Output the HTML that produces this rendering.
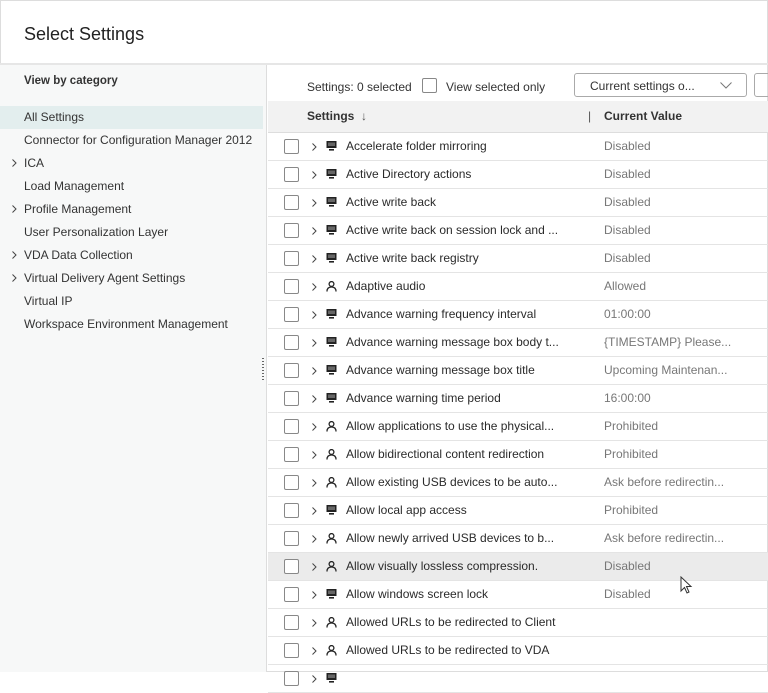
<!DOCTYPE html>
<html><head><meta charset="utf-8"><style>
*{box-sizing:border-box;margin:0;padding:0}
svg{display:block}
body{width:768px;height:672px;overflow:hidden;background:#fff;font-family:"Liberation Sans",sans-serif;color:#333;position:relative;font-size:12px}
.frame{position:absolute;left:0;top:0;width:768px;height:672px;border:1px solid #ddd}
.title{position:absolute;left:24px;top:24px;font-size:18px;color:#222}
.hline{position:absolute;left:0;top:63px;width:768px;height:2px;background:#e6e6e6}
.side{position:absolute;left:0;top:65px;width:267px;height:607px;background:#f7f8f8;border-right:1px solid #ddd}
.side .h{position:absolute;left:24px;top:10px;font-weight:bold;font-size:11.5px;color:#333}
.side .it{position:absolute;left:0;width:263px;height:23px;line-height:23px;padding-left:24px;font-size:12px;color:#333;white-space:nowrap}
.side .sel{background:#e3eeee}
.side .ch{position:absolute;left:12px;top:7px}
.grip{position:absolute;left:262px;top:358px;width:2px;height:22px;background:repeating-linear-gradient(#666 0 1px,transparent 1px 3px)}
.tb{position:absolute;left:307px;top:80px;font-size:12px;color:#333}
.cb{position:absolute;width:15px;height:15px;border:1px solid #888;border-radius:2px;background:#fff}
.dd{position:absolute;left:574px;top:73px;width:173px;height:24px;border:1px solid #aaa;border-radius:3px;padding:5px 0 0 15px;font-size:12px;color:#333}
.dd2{position:absolute;left:754px;top:73px;width:30px;height:24px;border:1px solid #aaa;border-radius:3px}
.th{position:absolute;left:268px;top:101px;width:500px;height:32px;background:#f2f2f2;border-bottom:1px solid #ddd}
.th span{position:absolute;top:8px;font-weight:bold;font-size:12px;color:#333}
.row{position:absolute;left:268px;width:500px;height:28px;border-bottom:1px solid #e4e4e4}
.row .cb{left:16px;top:6px}
.row .ar{position:absolute;left:44px;top:10px}
.row .ic{position:absolute;left:58px;top:8px}
.row .n{position:absolute;left:78px;top:6px;white-space:nowrap;color:#2a2a2a}
.row .v{position:absolute;left:336px;top:6px;white-space:nowrap;color:#777}
</style></head><body>
<div class="frame"></div>
<div class="title">Select Settings</div>
<div class="hline"></div>
<div class="side">
<div class="h">View by category</div>
<div class="it sel" style="top:41px">All Settings</div>
<div class="it" style="top:64px">Connector for Configuration Manager 2012</div>
<div class="it" style="top:87px"><svg class="ch" width="5" height="8"><path d="M0.5 0.5L4 4L0.5 7.5" fill="none" stroke="#444"/></svg>ICA</div>
<div class="it" style="top:110px">Load Management</div>
<div class="it" style="top:133px"><svg class="ch" width="5" height="8"><path d="M0.5 0.5L4 4L0.5 7.5" fill="none" stroke="#444"/></svg>Profile Management</div>
<div class="it" style="top:156px">User Personalization Layer</div>
<div class="it" style="top:179px"><svg class="ch" width="5" height="8"><path d="M0.5 0.5L4 4L0.5 7.5" fill="none" stroke="#444"/></svg>VDA Data Collection</div>
<div class="it" style="top:202px"><svg class="ch" width="5" height="8"><path d="M0.5 0.5L4 4L0.5 7.5" fill="none" stroke="#444"/></svg>Virtual Delivery Agent Settings</div>
<div class="it" style="top:225px">Virtual IP</div>
<div class="it" style="top:248px">Workspace Environment Management</div>
</div>
<div class="grip"></div>
<div class="tb">Settings: 0 selected</div>
<div class="cb" style="left:422px;top:78px"></div>
<div class="tb" style="left:446px">View selected only</div>
<div class="dd">Current settings o...<svg style="position:absolute;right:14px;top:8px" width="12" height="7"><path d="M0.5 0.5L6 6L11.5 0.5" fill="none" stroke="#777"/></svg></div>
<div class="dd2"></div>
<div class="th"><span style="left:39px">Settings&nbsp; <span style="position:static;font-weight:normal;color:#555">↓</span></span><span style="left:320px;font-weight:normal;color:#555">|</span><span style="left:336px">Current Value</span></div>
<div id="rows"></div>
<script>
var M='<svg width="11" height="10"><rect x="0.5" y="0" width="10" height="7" fill="#222"/><rect x="2" y="1.5" width="7" height="3.5" fill="#666"/><rect x="3" y="8" width="5" height="1.6" fill="#222"/></svg>';
var U='<svg width="11" height="11"><circle cx="5.5" cy="3" r="2.4" fill="none" stroke="#222" stroke-width="1.3"/><path d="M1 10.5Q1 6 5.5 6Q10 6 10 10.5" fill="none" stroke="#222" stroke-width="1.3"/></svg>';
var C='<svg width="5" height="8"><path d="M0.5 0.5L4 4L0.5 7.5" fill="none" stroke="#444"/></svg>';
var d=[["M","Accelerate folder mirroring","Disabled"],["M","Active Directory actions","Disabled"],["M","Active write back","Disabled"],["M","Active write back on session lock and ...","Disabled"],["M","Active write back registry","Disabled"],["U","Adaptive audio","Allowed"],["M","Advance warning frequency interval","01:00:00"],["M","Advance warning message box body t...","{TIMESTAMP} Please..."],["M","Advance warning message box title","Upcoming Maintenan..."],["M","Advance warning time period","16:00:00"],["U","Allow applications to use the physical...","Prohibited"],["U","Allow bidirectional content redirection","Prohibited"],["U","Allow existing USB devices to be auto...","Ask before redirectin..."],["M","Allow local app access","Prohibited"],["U","Allow newly arrived USB devices to b...","Ask before redirectin..."],["U","Allow visually lossless compression.","Disabled"],["M","Allow windows screen lock","Disabled"],["U","Allowed URLs to be redirected to Client",""],["U","Allowed URLs to be redirected to VDA",""],["M","",""]];
var h='';d.forEach(function(r,i){h+='<div class="row" style="top:'+(133+28*i)+'px'+(i==15?';background:#ebebeb':'')+'"><div class="cb"></div><span class="ar">'+C+'</span><span class="ic">'+(r[0]=="M"?M:U)+'</span><span class="n">'+r[1]+'</span><span class="v">'+r[2]+'</span></div>';});
document.getElementById('rows').innerHTML=h;
</script>
<svg style="position:absolute;left:680px;top:576px" width="14" height="20"><path d="M1 1L1 15L4.5 11.5L7 17L9 16L6.5 10.5L11 10.5Z" fill="#fff" stroke="#333"/></svg>
</body></html>
